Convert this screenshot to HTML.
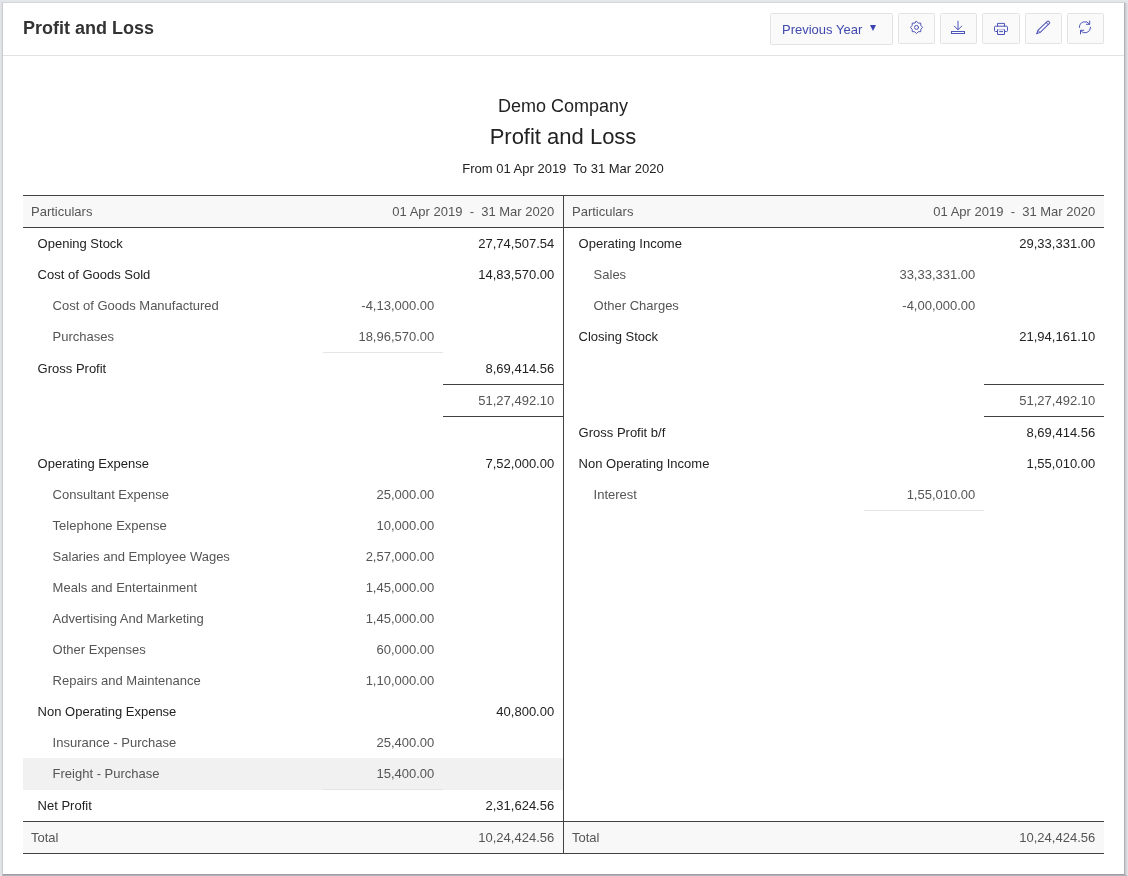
<!DOCTYPE html>
<html>
<head>
<meta charset="utf-8">
<title>Profit and Loss</title>
<style>
*{box-sizing:border-box;margin:0;padding:0}
html,body{width:1128px;height:876px;overflow:hidden}
body{background:#e4e7ea;font-family:"Liberation Sans",sans-serif;font-size:13px;color:#222;position:relative}
.panel{will-change:transform;position:absolute;left:3px;top:3px;width:1121px;height:871px;background:#fff}
.e{position:absolute}
.hdr{position:absolute;left:0;top:0;width:1121px;height:53px;border-bottom:1px solid #e2e2e2}
.title{position:absolute;left:20px;top:13px;font-size:18px;font-weight:bold;color:#333;line-height:24px}
.btn{position:absolute;top:10px;height:31px;border:1px solid #e3e3e4;background:#fafafa;border-radius:1.5px}
.btn svg{position:absolute;left:50%;top:50%}
.sel{left:767px;width:123px;height:32px;color:#3f49ad;font-size:13px;line-height:30px;padding-top:1px;padding-left:11px}
.sel i{position:absolute;left:98.5px;top:11px;width:0;height:0;border-left:3.5px solid transparent;border-right:3.5px solid transparent;border-top:6px solid #3a42b2}
.co{position:absolute;left:0;width:1120px;text-align:center;color:#222}
.c1{top:92px;font-size:18px;line-height:22px}
.c2{top:121px;font-size:22px;line-height:26px}
.c3{top:157.5px;font-size:13px;line-height:16px;white-space:pre}
.tbl{position:absolute;top:192px;width:540px}
.tl{left:20px}
.tr{left:561px}
.row{position:relative;height:31px;line-height:31px;white-space:nowrap}
.row span{position:absolute;top:0}
.row .n{left:14.6px}
.row .s{left:29.6px;color:#555}
.row .a{right:128.7px;color:#555}
.row .b{right:8.8px}
.h{height:33px;line-height:31px;border-top:1px solid #414141;border-bottom:1px solid #414141;background:#f8f8f8;color:#555}
.h .n{left:8px}
.h .b{color:#555}
.ul::after{content:"";position:absolute;left:300px;width:120px;bottom:0;height:1px;background:#e5e5e5}
.bb{border-bottom:1px solid #414141}
.row.u1{height:32px}
.tot{height:33px;line-height:31px;border-top:1px solid #414141;border-bottom:1px solid #414141;background:#f8f8f8;color:#555;position:absolute;left:0;top:626px;width:540px}
.tot .n{left:8px}.tot .b{color:#555}
.seg{position:absolute;left:420px;width:120px;height:1px;background:#414141}
.hl{background:#f1f1f1}
.g{color:#555}
.vline{position:absolute;left:560px;top:192px;width:1px;height:659px;background:#414141}
</style>
</head>
<body>
<div class="e" style="left:0;top:0;width:1128px;height:1px;background:#e5e8eb"></div>
<div class="e" style="left:0;top:1px;width:1128px;height:1px;background:#e2e5e8"></div>
<div class="e" style="left:2px;top:2px;width:1124px;height:1px;background:#d5d6d9"></div>
<div class="e" style="left:0;top:1px;width:1px;height:875px;background:#e2e5e8"></div>
<div class="e" style="left:1px;top:2px;width:1px;height:873px;background:#dddee2"></div>
<div class="e" style="left:2px;top:3px;width:1px;height:872px;background:#cbccce"></div>
<div class="e" style="left:1127px;top:3px;width:1px;height:873px;background:#dfe0e3"></div>
<div class="e" style="left:1126px;top:3px;width:1px;height:873px;background:#d6d7db"></div>
<div class="e" style="left:1125px;top:3px;width:1px;height:873px;background:#cbccd1"></div>
<div class="e" style="left:1124px;top:3px;width:1px;height:872px;background:#b0b0b5"></div>
<div class="e" style="left:2px;top:875px;width:1125px;height:1px;background:#b2b3b8"></div>
<div class="e" style="left:3px;top:874px;width:1122px;height:1px;background:#9e9da4"></div>
<div class="panel">
  <div class="hdr">
    <div class="title">Profit and Loss</div>
    <div class="btn sel">Previous Year<i></i></div>
    <div class="btn" style="left:895px;width:37px"></div>
    <div class="btn" style="left:937px;width:37px"></div>
    <div class="btn" style="left:979px;width:38px"></div>
    <div class="btn" style="left:1022px;width:37px"></div>
    <div class="btn" style="left:1064px;width:37px"></div>
    <svg class="ic" width="1121" height="53" viewBox="3 3 1121 53" style="position:absolute;left:0;top:0" fill="none" stroke="#4d55b8" stroke-width="1" stroke-linejoin="round" stroke-linecap="round">
      <!-- gear -->
      <g transform="translate(916.5 27.4)">
        <path d="M0 -6.1 L1.8 -4.35 L4.25 -4.25 L4.35 -1.8 L6.1 0 L4.35 1.8 L4.25 4.25 L1.8 4.35 L0 6.1 L-1.8 4.35 L-4.25 4.25 L-4.35 1.8 L-6.1 0 L-4.35 -1.8 L-4.25 -4.25 L-1.8 -4.35 Z"/>
        <circle r="2"/>
      </g>
      <!-- download -->
      <path d="M958 21.2 V29.6 M954.3 26.1 L958 29.8 L961.7 26.1"/>
      <rect x="951.5" y="31.5" width="13" height="2" stroke-linejoin="miter"/>
      <!-- printer -->
      <path d="M997.5 31.5 H995.5 a1 1 0 0 1 -1 -1 V27.2 a1 1 0 0 1 1 -1 H1006.5 a1 1 0 0 1 1 1 V30.5 a1 1 0 0 1 -1 1 H1004.5"/>
      <path d="M997.5 26 V23.4 H1004.5 V26"/>
      <path d="M997.5 29.8 V34.5 H1004.5 V29.8"/>
      <path d="M997.5 29.8 H1004.5" stroke-opacity=".45"/>
      <path d="M999.6 31.6 H1002.6"/>
      <!-- pencil -->
      <g transform="translate(1043.2 27.4) rotate(-44)">
        <path d="M-5.6 -1.5 H7.2 a1 1 0 0 1 1 1 V0.5 a1 1 0 0 1 -1 1 H-5.6 L-9.2 0 Z"/>
        <path d="M5.6 -1.5 V1.5 M-5.8 -1.5 V1.5" stroke-opacity=".7"/>
      </g>
      <!-- refresh -->
      <path d="M1079.4 27.4 A5.6 5.6 0 0 1 1089.6 24.1"/>
      <path d="M1089.7 21 V24.3 H1086.5"/>
      <path d="M1090.6 27.2 A5.6 5.6 0 0 1 1080.5 30.6"/>
      <path d="M1080.5 33.9 V30.3 H1083.8"/>
    </svg>
  </div>
  <div class="co c1">Demo Company</div>
  <div class="co c2">Profit and Loss</div>
  <div class="co c3">From 01 Apr 2019  To 31 Mar 2020</div>

  <div class="tbl tl">
    <div class="row h"><span class="n">Particulars</span><span class="b" style="white-space:pre">01 Apr 2019  -  31 Mar 2020</span></div>
    <div class="row"><span class="n">Opening Stock</span><span class="b">27,74,507.54</span></div>
    <div class="row"><span class="n">Cost of Goods Sold</span><span class="b">14,83,570.00</span></div>
    <div class="row"><span class="s">Cost of Goods Manufactured</span><span class="a">-4,13,000.00</span></div>
    <div class="row u1 ul"><span class="s">Purchases</span><span class="a">18,96,570.00</span></div>
    <div class="row u1"><span class="n">Gross Profit</span><span class="b">8,69,414.56</span></div>
    <div class="row u1"><span class="b g">51,27,492.10</span></div>
    <div class="row"></div>
    <div class="row"><span class="n">Operating Expense</span><span class="b">7,52,000.00</span></div>
    <div class="row"><span class="s">Consultant Expense</span><span class="a">25,000.00</span></div>
    <div class="row"><span class="s">Telephone Expense</span><span class="a">10,000.00</span></div>
    <div class="row"><span class="s">Salaries and Employee Wages</span><span class="a">2,57,000.00</span></div>
    <div class="row"><span class="s">Meals and Entertainment</span><span class="a">1,45,000.00</span></div>
    <div class="row"><span class="s">Advertising And Marketing</span><span class="a">1,45,000.00</span></div>
    <div class="row"><span class="s">Other Expenses</span><span class="a">60,000.00</span></div>
    <div class="row"><span class="s">Repairs and Maintenance</span><span class="a">1,10,000.00</span></div>
    <div class="row"><span class="n">Non Operating Expense</span><span class="b">40,800.00</span></div>
    <div class="row"><span class="s">Insurance - Purchase</span><span class="a">25,400.00</span></div>
    <div class="row u1 ul hl"><span class="s">Freight - Purchase</span><span class="a">15,400.00</span></div>
    <div class="row"><span class="n">Net Profit</span><span class="b">2,31,624.56</span></div>
    <div class="seg" style="top:189px"></div><div class="seg" style="top:221px"></div>
    <div class="row tot"><span class="n">Total</span><span class="b">10,24,424.56</span></div>
  </div>
  <div class="tbl tr">
    <div class="row h"><span class="n">Particulars</span><span class="b" style="white-space:pre">01 Apr 2019  -  31 Mar 2020</span></div>
    <div class="row"><span class="n">Operating Income</span><span class="b">29,33,331.00</span></div>
    <div class="row"><span class="s">Sales</span><span class="a">33,33,331.00</span></div>
    <div class="row"><span class="s">Other Charges</span><span class="a">-4,00,000.00</span></div>
    <div class="row u1"><span class="n">Closing Stock</span><span class="b">21,94,161.10</span></div>
    <div class="row u1"></div>
    <div class="row u1"><span class="b g">51,27,492.10</span></div>
    <div class="row"><span class="n">Gross Profit b/f</span><span class="b">8,69,414.56</span></div>
    <div class="row"><span class="n">Non Operating Income</span><span class="b">1,55,010.00</span></div>
    <div class="row u1 ul"><span class="s">Interest</span><span class="a">1,55,010.00</span></div>
    <div class="seg" style="top:189px"></div><div class="seg" style="top:221px"></div>
    <div class="row tot"><span class="n">Total</span><span class="b">10,24,424.56</span></div>
  </div>
  <div class="vline"></div>
</div>
</body>
</html>
